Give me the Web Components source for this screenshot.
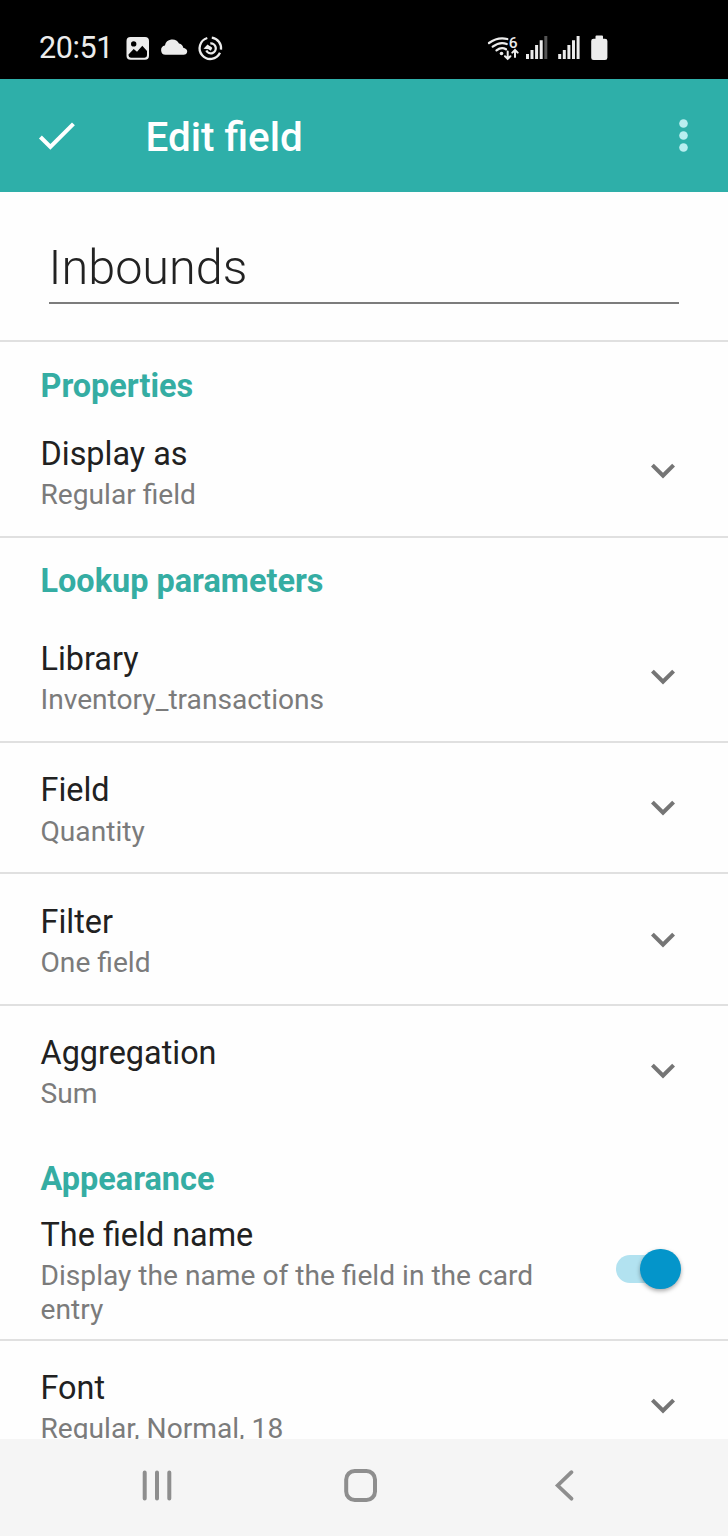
<!DOCTYPE html>
<html lang="en">
<head>
<meta charset="utf-8">
<title>Edit field</title>
<style>
html,body{margin:0;padding:0;background:#fefefe}
body{width:728px;height:1536px;overflow:hidden;font-family:Roboto,"Liberation Sans",sans-serif}
</style>
</head>
<body>
<edit-screen></edit-screen>

<template id="t-status">
<style>
:host{display:flex;align-items:flex-start;justify-content:space-between;box-sizing:border-box;flex:none;height:79px;background:#000;color:#ececec;padding:30px 120px 0 39px}
.g{display:flex;align-items:center;height:36px}
.time{font-size:30.500px;line-height:36px;letter-spacing:-.4px;width:73.500px;margin-right:13.500px;white-space:nowrap;font-weight:400}
svg{display:block;flex:none}
</style>
<div class="g"><span class="time">20:51</span>
<svg width="100" height="36" viewBox="0 0 100 36" fill="#ececec">
<path fill-rule="evenodd" d="M4.500 7h14.500a4 4 0 0 1 4 4v14.700a4 4 0 0 1-4 4H4.500a4 4 0 0 1-4-4V11a4 4 0 0 1 4-4zM2.500 24.500v.8a2.400 2.400 0 0 0 2.400 2.400h13.700a2.400 2.400 0 0 0 2.400-2.400v-4.300l-4.700-5.200-5.300 6-3.300-2.700zM7.700 11.200a2.700 2.700 0 1 0 0 5.400 2.700 2.700 0 0 0 0-5.400z"/>
<path d="M39.500 24.800a4.700 4.700 0 0 1-.6-9.300 7.600 7.600 0 0 1 14.100-2 5.300 5.300 0 0 1 4.300 4.300c1 .3 3.900 1.200 3.900 3.700 0 2-1.600 3.300-3.600 3.300z"/>
<g fill="none" stroke="#ececec">
<path stroke-width="2.300" d="M81.300 8A10.700 10.700 0 1 0 94 22.800M85.800 7.600A10.700 10.700 0 0 1 95 19.600"/>
<path stroke-width="2.300" d="M84.300 13.400A5 5 0 1 1 80.300 20.600"/>
<path stroke-width="2" d="M80.500 17.500q3-1.500 4.600.8"/></g>
<path d="M77.500 18.800l4-4.300 4.800 3.500-1.500 2.800-2.300-1.500z"/>
</svg></div>
<div class="g">
<svg width="121" height="36" viewBox="487 30 121 36" fill="#ececec">
<g fill="none" stroke="#ececec" stroke-width="2.300" stroke-linecap="round">
<path d="M489 43Q498 36.500 507.300 39M492.700 46.600Q500 41.200 506.700 44M496.500 50.300Q501.500 46.500 506 49.300"/>
<path d="M507.700 51.500v7M505 56.200l2.700 2.600 2.700-2.600M515 57v-6.700M512.300 52.600l2.700-2.600 2.700 2.600" stroke-width="2"/></g>
<circle cx="501.500" cy="53.500" r="1.800"/>
<text x="508.800" y="47.500" font-family="Roboto,sans-serif" font-weight="500" font-size="15.500">6</text>
<path d="M526 54h3v5h-3zM530.500 50h3v9h-3zM535.100 45h3v14h-3zM539.700 40.300h3V59h-3z"/><path fill="#555" d="M544.300 36h3v23h-3z"/>
<path d="M558.200 54h3v5h-3zM562.800 50h3v9h-3zM567.400 45h3v14h-3zM572 40.300h3V59h-3zM576.600 36h3v23h-3z"/>
<path d="M595.500 36.500a1 1 0 0 1 1-1h5.500a1 1 0 0 1 1 1v2.200h2a2.400 2.400 0 0 1 2.400 2.400v16.600a2.400 2.400 0 0 1-2.400 2.400h-11.400a2.400 2.400 0 0 1-2.400-2.400V41.100a2.400 2.400 0 0 1 2.400-2.400h1.900z"/>
</svg></div>
</template>

<template id="t-bar">
<style>
:host{display:flex;align-items:center;box-sizing:border-box;flex:none;height:113px;background:#2eafa9;color:#fff;padding:0 32px 0 32px}
h1{margin:0 auto 0 64.500px;font-size:40.400px;line-height:48px;font-weight:500;padding-top:4px;white-space:nowrap}
svg{display:block;flex:none}
</style>
<svg width="49" height="49" viewBox="0 0 24 24" fill="#fff"><path d="M9 16.170 4.830 12l-1.420 1.410L9 19 21 7l-1.410-1.410z"/></svg>
<h1><slot></slot></h1>
<svg width="25" height="49" viewBox="0 0 25 49" fill="#b9eef0"><circle cx="12.500" cy="12.500" r="4.300"/><circle cx="12.500" cy="24.500" r="4.300"/><circle cx="12.500" cy="36.500" r="4.300"/></svg>
</template>

<template id="t-name">
<style>
:host{display:block;box-sizing:border-box;flex:none;height:150px;padding:47px 49px 0 48.500px;border-bottom:2px solid #e0e0e0}
div{height:63px;border-bottom:2px solid #7c7c7c;font-size:48.600px;line-height:58px;font-weight:300;color:#222}
</style>
<div><slot></slot></div>
</template>

<template id="t-heading">
<style>
:host{display:block;flex:none;margin-top:23.800px;padding-left:40.500px;font-size:32.450px;line-height:40px;font-weight:700;color:#35ada3}
</style>
<slot></slot>
</template>

<template id="t-row">
<style>
:host{display:flex;align-items:center;flex:none;padding:var(--top,27.200px) 40.700px var(--bottom,24.300px) 40.500px;border-bottom:2px solid #e0e0e0}
:host([last]){border-bottom:0}
.t{flex:1;min-width:0}
.title{font-size:32.400px;line-height:40px;color:#212121}
.sub{margin-top:4.300px;font-size:28.150px;line-height:33.500px;color:#7b7b7b;max-width:530px}
</style>
<div class="t"><div class="title"><slot name="title"></slot></div><div class="sub"><slot></slot></div></div>
<slot name="control"><chevron-icon></chevron-icon></slot>
</template>

<template id="t-chevron">
<style>:host{display:block;flex:none}svg{display:block}</style>
<svg width="48" height="48" viewBox="0 0 24 24" fill="#757575"><path d="M16.590 7.850 12 12.430 7.410 7.850 6 9.260l6 6 6-6z"/></svg>
</template>

<template id="t-switch">
<style>
:host{display:flex;align-items:center;justify-content:flex-end;flex:none;width:60px;height:28.500px;border-radius:15px;background:#b2e2f0;margin-right:11px;box-sizing:border-box;margin-top:-3px}
i{display:block;width:40.500px;height:40.500px;border-radius:50%;background:#0495ca;box-shadow:0 2px 4px rgba(0,0,0,.34);flex:none;margin-right:-4.500px}
</style>
<i></i>
</template>

<template id="t-nav">
<style>
:host{display:block;flex:none;height:97px;background:#f5f5f5}
svg{display:block}
</style>
<svg width="728" height="97" viewBox="0 1439 728 97" fill="none" stroke="#8e8e8e" stroke-width="4" stroke-linecap="round">
<path d="M144.700 1472.500v26M157 1472.500v26M169.300 1472.500v26"/>
<rect x="346.200" y="1471" width="28.800" height="29" rx="8.500"/>
<path d="M571.500 1472.200 557.700 1485.500 571.500 1498.700" stroke-linejoin="miter" stroke-width="3.800"/>
</svg>
</template>

<template id="t-screen">
<style>
:host{display:flex;flex-direction:column;width:728px;height:1536px;background:#fefefe;overflow:hidden}
main{flex:1;min-height:0;overflow:hidden;display:flex;flex-direction:column}
.a{--top:27.800px}.b{--top:37.600px}.c{--top:16.200px;--bottom:12.500px}
</style>
<status-bar></status-bar>
<app-bar>Edit field</app-bar>
<main>
<name-input>Inbounds</name-input>
<section-heading>Properties</section-heading>
<setting-row class="a"><span slot="title">Display as</span>Regular field</setting-row>
<section-heading>Lookup parameters</section-heading>
<setting-row class="b"><span slot="title">Library</span>Inventory_transactions</setting-row>
<setting-row><span slot="title">Field</span>Quantity</setting-row>
<setting-row><span slot="title">Filter</span>One field</setting-row>
<setting-row last><span slot="title">Aggregation</span>Sum</setting-row>
<section-heading>Appearance</section-heading>
<setting-row class="c"><span slot="title">The field name</span>Display the name of the field in the card entry<toggle-switch slot="control"></toggle-switch></setting-row>
<setting-row><span slot="title">Font</span>Regular, Normal, 18</setting-row>
</main>
<nav-bar></nav-bar>
</template>

<script>
const define = (name, id) => customElements.define(name, class extends HTMLElement {
  constructor() {
    super();
    this.attachShadow({ mode: 'open' }).append(document.getElementById(id).content.cloneNode(true));
  }
});
define('status-bar', 't-status');
define('app-bar', 't-bar');
define('name-input', 't-name');
define('section-heading', 't-heading');
define('chevron-icon', 't-chevron');
define('toggle-switch', 't-switch');
define('setting-row', 't-row');
define('nav-bar', 't-nav');
define('edit-screen', 't-screen');
</script>
</body>
</html>
